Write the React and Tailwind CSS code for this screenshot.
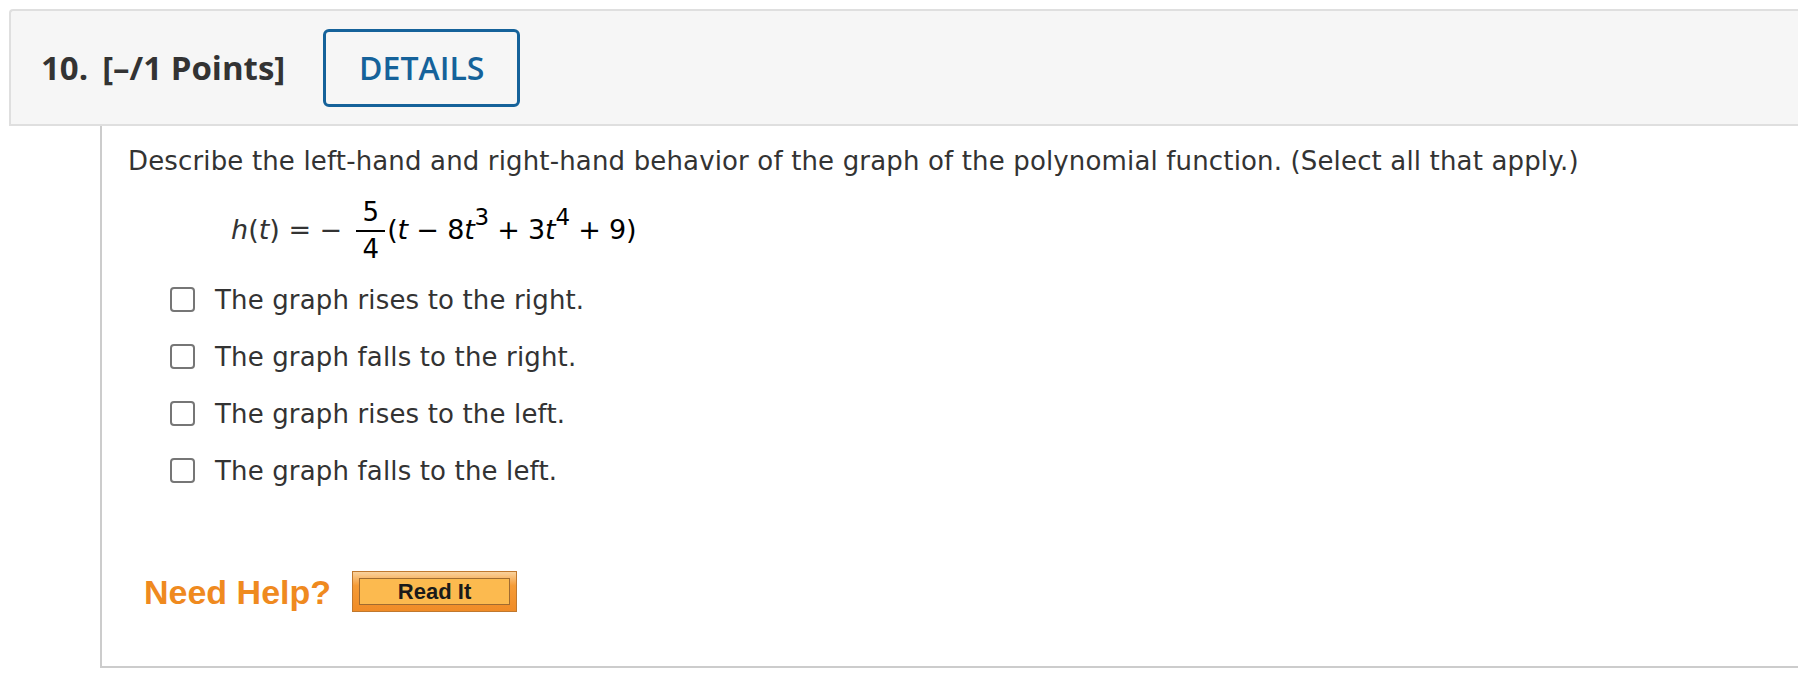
import React from "react";

const body = { fontFamily: '"DejaVu Sans", Verdana, sans-serif' };
const head = { fontFamily: '"Open Sans", sans-serif' };
const arial = { fontFamily: '"Liberation Sans", Arial, sans-serif' };

function Option({ label }) {
  return (
    <div className="flex h-[57px] items-center">
      <span className="ml-[42px] box-border h-[25px] w-[25px] rounded-[4px] border-2 border-[#767676] bg-white" />
      <span className="ml-[20px] text-[26px] leading-[30px] tracking-[0.15px] text-[#333333]" style={body}>
        {label}
      </span>
    </div>
  );
}

export default function App() {
  return (
    <div className="relative h-[694px] w-[1798px] overflow-hidden bg-white">
      <div className="pl-[9px] pt-[9px]">
        <div
          className="box-border flex h-[117px] items-center rounded-tl-[4px] border-2 border-r-0 border-[#dfdfdf] bg-[#f6f6f6] pl-[30px]"
          style={head}
        >
          <span className="text-[33px] font-bold leading-none text-[#333333]">10.</span>
          <span className="ml-[14px] text-[33px] font-bold leading-none text-[#333333]">[–/1 Points]</span>
          <div className="ml-[38px] box-border flex h-[78px] w-[197px] items-center justify-center rounded-[6px] border-[3px] border-[#15629a]">
            <span className="text-[32px] font-semibold leading-none text-[#15629a]">DETAILS</span>
          </div>
        </div>
      </div>

      <div className="ml-[100px] box-border h-[542px] border-b-2 border-l-2 border-[#cccccc] pl-[26px] pt-[20px]">
        <p className="text-[26px] leading-[30px] tracking-[0.15px] text-[#333333]" style={body}>
          Describe the left-hand and right-hand behavior of the graph of the polynomial function. (Select all that apply.)
        </p>

        <div className="mt-[23px] flex h-[62px] items-center pl-[103px]" style={body}>
          <span className="whitespace-pre text-[27px] leading-[34px] text-[#333333]">
            <i>h</i>(<i>t</i>) = −
          </span>
          <span className="ml-[14px] flex w-[29px] flex-col items-center text-[26px] leading-[26px] text-black">
            <span className="pb-[5px]">5</span>
            <span className="h-[2px] w-full bg-black" />
            <span className="pt-[4px]">4</span>
          </span>
          <span className="ml-[2px] whitespace-pre text-[27px] leading-[34px] tracking-[-0.2px] text-black">
            (<i>t</i> − 8<i>t</i>
            <sup className="top-[-0.6em] text-[85%]">3</sup> + 3<i>t</i>
            <sup className="top-[-0.6em] text-[85%]">4</sup> + 9)
          </span>
        </div>

        <div className="mt-[10px]">
          <Option label="The graph rises to the right." />
          <Option label="The graph falls to the right." />
          <Option label="The graph rises to the left." />
          <Option label="The graph falls to the left." />
        </div>

        <div className="mt-[72px] flex h-[41px] items-center">
          <span className="ml-[16px] text-[34px] font-bold leading-none text-[#ef8a1f]" style={arial}>
            Need Help?
          </span>
          <div className="ml-[21px] box-border h-[41px] w-[165px] border border-[#c0782e] bg-[linear-gradient(to_bottom,#fad29c_0%,#f59b36_35%,#f08c27_100%)] p-[6px]">
            <div className="box-border flex h-full w-full items-center justify-center border border-[#a06b30] bg-[#fcba4f]">
              <span className="text-[22px] font-bold leading-none text-[#1a1a1a]" style={arial}>
                Read It
              </span>
            </div>
          </div>
        </div>
      </div>
    </div>
  );
}
